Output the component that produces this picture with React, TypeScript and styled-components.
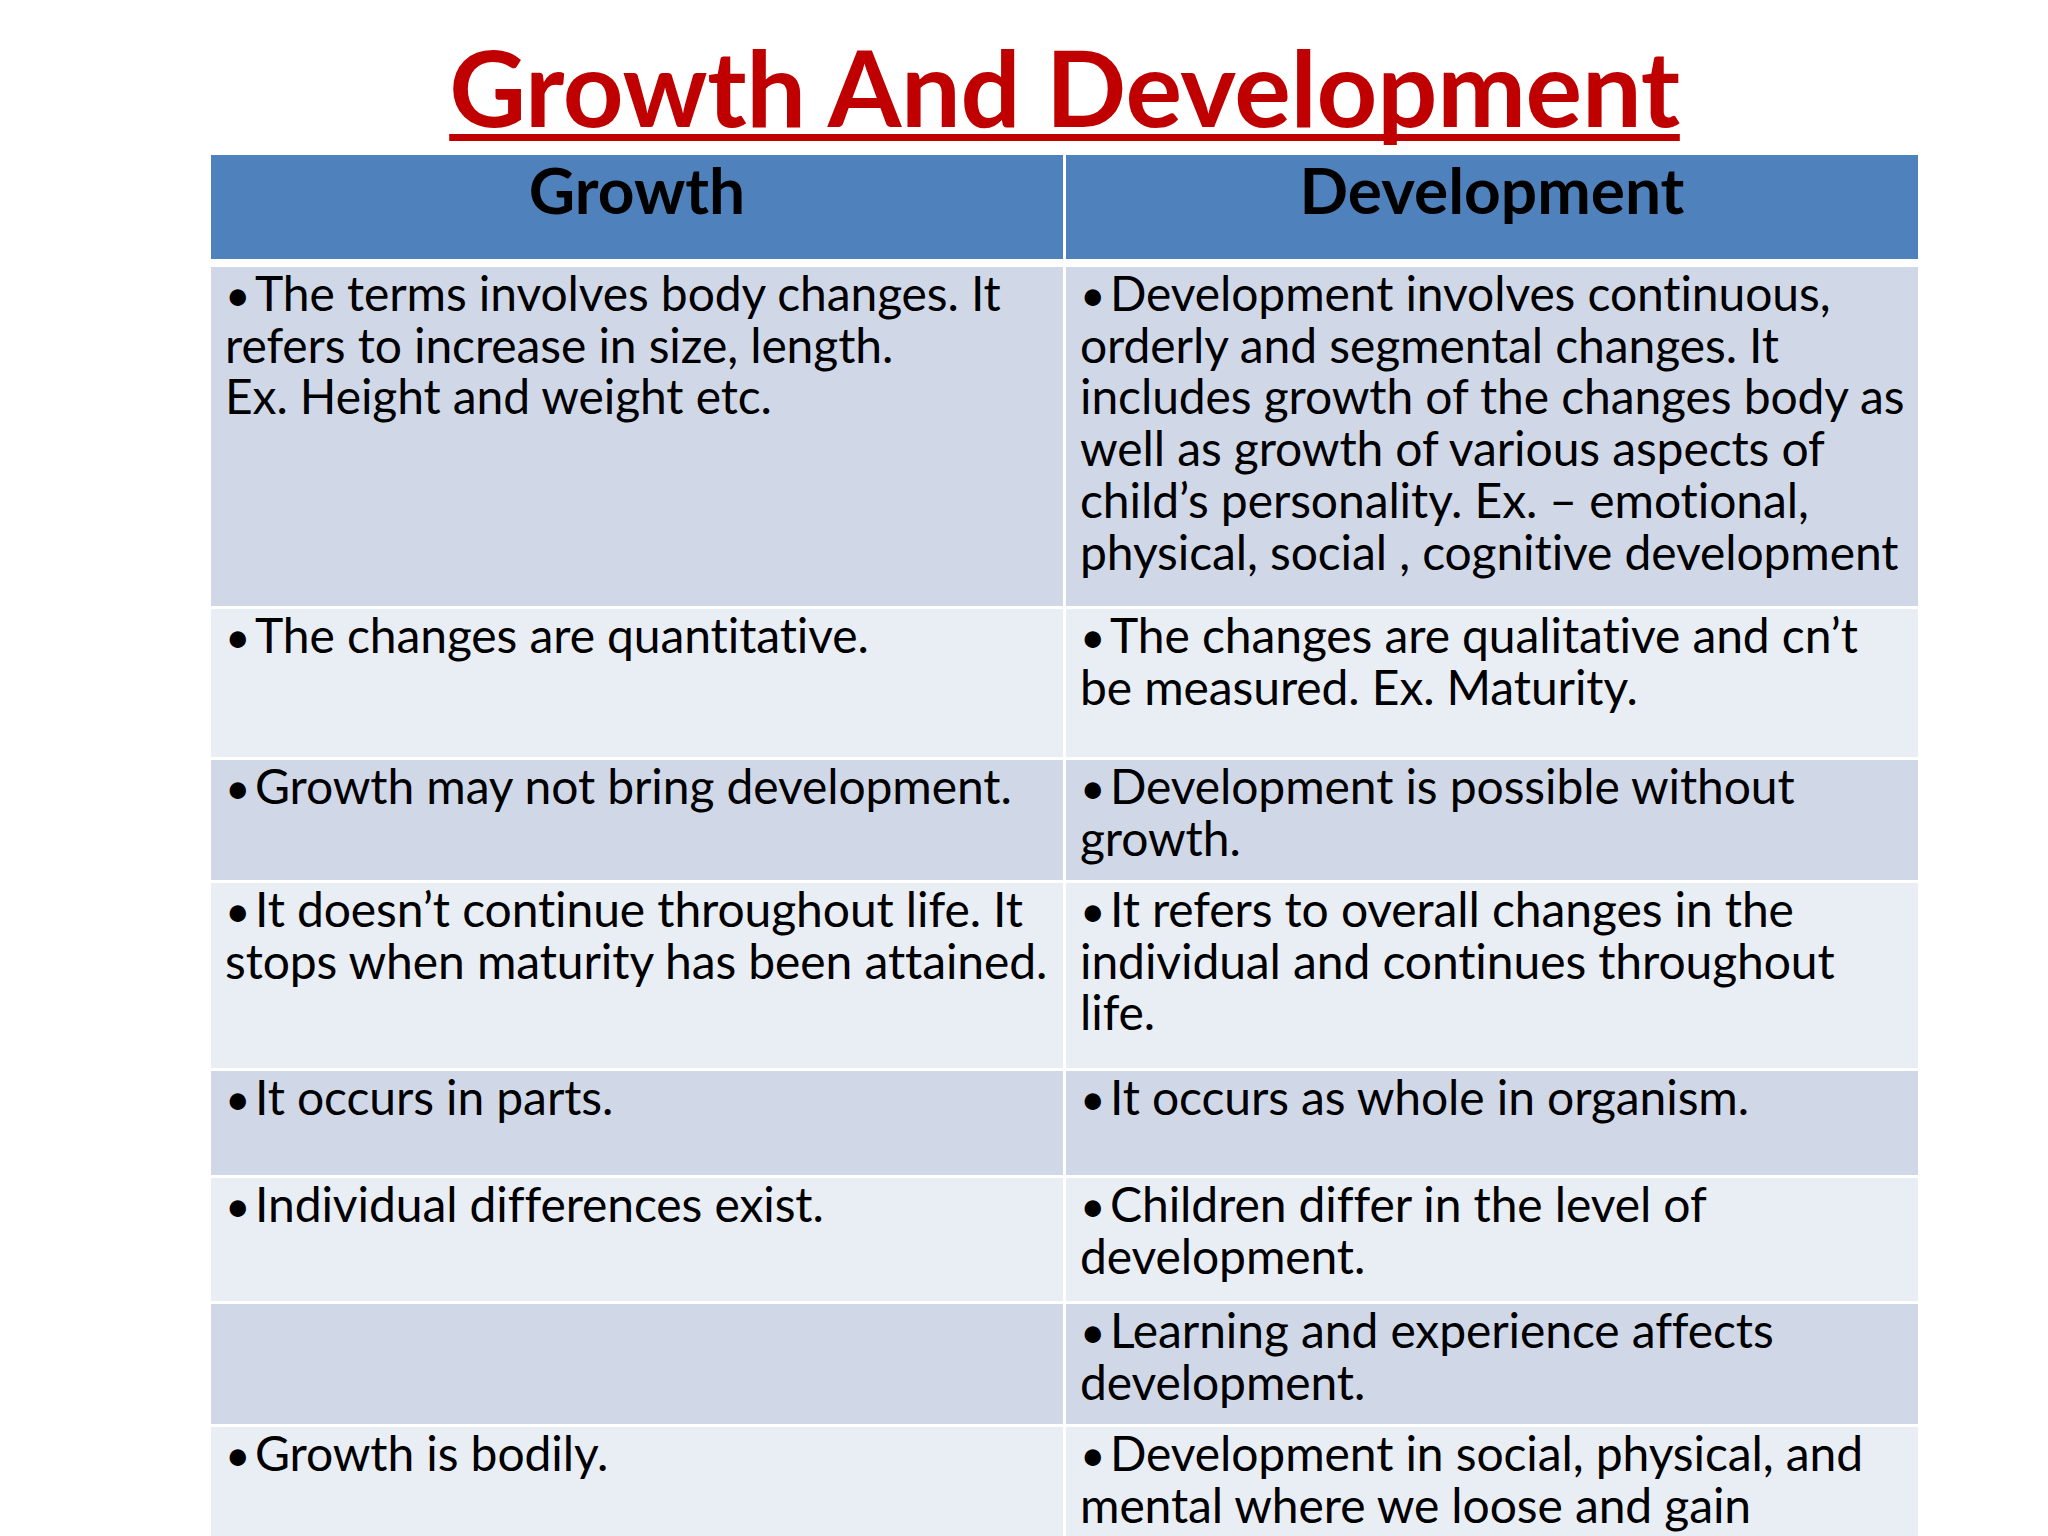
import React from "react";
import styled, { createGlobalStyle } from "styled-components";

const Global = createGlobalStyle`
  html, body { margin: 0; padding: 0; background: #ffffff; }
  body { font-family: Lato, "Liberation Sans", sans-serif; color: #000; }
`;

const Slide = styled.div`
  width: 2048px;
  height: 1536px;
  overflow: hidden;
  background: #ffffff;
  box-sizing: border-box;
  padding: 26px 0 0 211px;
`;

const Column = styled.div`
  width: 1707px;
  display: flex;
  flex-direction: column;
`;

const Title = styled.h1`
  margin: 0 0 9px 0;
  text-align: center;
  font-family: Lato, "Liberation Sans", sans-serif;
  font-weight: 700;
  font-size: 106px;
  line-height: 120px;
  letter-spacing: -0.3px;
  color: #c00000;
  text-decoration: underline;
  text-decoration-thickness: 7px;
  text-underline-offset: 7px;
  text-decoration-skip-ink: none;
`;

const Table = styled.div`
  display: flex;
  flex-direction: column;
  gap: 3px;
`;

const HeadRow = styled.div`
  display: grid;
  grid-template-columns: 1fr 1fr;
  column-gap: 3px;
  height: 104px;
  margin-bottom: 5px;
`;

const HeadCell = styled.div`
  background: #4f81bd;
  text-align: center;
  font-weight: 700;
  font-size: 64px;
  line-height: 70px;
  color: #000;
`;

const Row = styled.div<{ $h: number; $band: boolean }>`
  display: grid;
  grid-template-columns: 1fr 1fr;
  column-gap: 3px;
  height: ${(p) => p.$h}px;
  flex: none;
  & > div {
    background: ${(p) => (p.$band ? "#d0d8e8" : "#e9edf4")};
  }
`;

const Cell = styled.div`
  padding: 0 6px 0 14px;
  font-size: 48px;
  line-height: 51.7px;
  letter-spacing: -0.1px;
  overflow: hidden;
`;

const Line = styled.div`
  white-space: nowrap;
`;

const Bullet = styled.span`
  display: inline-block;
  width: 30px;
  font-size: 44px;
  line-height: 0;
  vertical-align: baseline;
`;

type RowData = { h: number; a: string[]; b: string[] };

const rows: RowData[] = [
  {
    h: 339,
    a: [
      "• The terms involves body changes. It",
      "refers to increase in size, length.",
      "Ex. Height and weight etc.",
    ],
    b: [
      "• Development involves continuous,",
      "orderly and segmental changes. It",
      "includes growth of the changes body as",
      "well as growth of various aspects of",
      "child’s personality. Ex. – emotional,",
      "physical, social , cognitive development",
    ],
  },
  {
    h: 148,
    a: ["• The changes are quantitative."],
    b: ["• The changes are qualitative and cn’t", "be measured. Ex. Maturity."],
  },
  {
    h: 120,
    a: ["• Growth may not bring development."],
    b: ["• Development is possible without", "growth."],
  },
  {
    h: 185,
    a: ["• It doesn’t continue throughout life. It", "stops when maturity has been attained."],
    b: ["• It refers to overall changes in the", "individual and continues throughout", "life."],
  },
  {
    h: 104,
    a: ["• It occurs in parts."],
    b: ["• It occurs as whole in organism."],
  },
  {
    h: 123,
    a: ["• Individual differences exist."],
    b: ["• Children differ in the level of", "development."],
  },
  {
    h: 120,
    a: [],
    b: ["• Learning and experience affects", "development."],
  },
  {
    h: 160,
    a: ["• Growth is bodily."],
    b: ["• Development in social, physical, and", "mental where we loose and gain"],
  },
];

const TextLine: React.FC<{ text: string }> = ({ text }) =>
  text.startsWith("• ") ? (
    <Line>
      <Bullet>•</Bullet>
      {text.slice(2)}
    </Line>
  ) : (
    <Line>{text}</Line>
  );

const CellText: React.FC<{ lines: string[] }> = ({ lines }) => (
  <Cell>
    {lines.map((l, i) => (
      <TextLine key={i} text={l} />
    ))}
  </Cell>
);

export default function App() {
  return (
    <Slide>
      <Global />
      <Column>
        <Title>Growth And Development</Title>
        <Table>
          <HeadRow>
            <HeadCell>Growth</HeadCell>
            <HeadCell>Development</HeadCell>
          </HeadRow>
          {rows.map((r, i) => (
            <Row key={i} $h={r.h} $band={i % 2 === 0}>
              <CellText lines={r.a} />
              <CellText lines={r.b} />
            </Row>
          ))}
        </Table>
      </Column>
    </Slide>
  );
}
